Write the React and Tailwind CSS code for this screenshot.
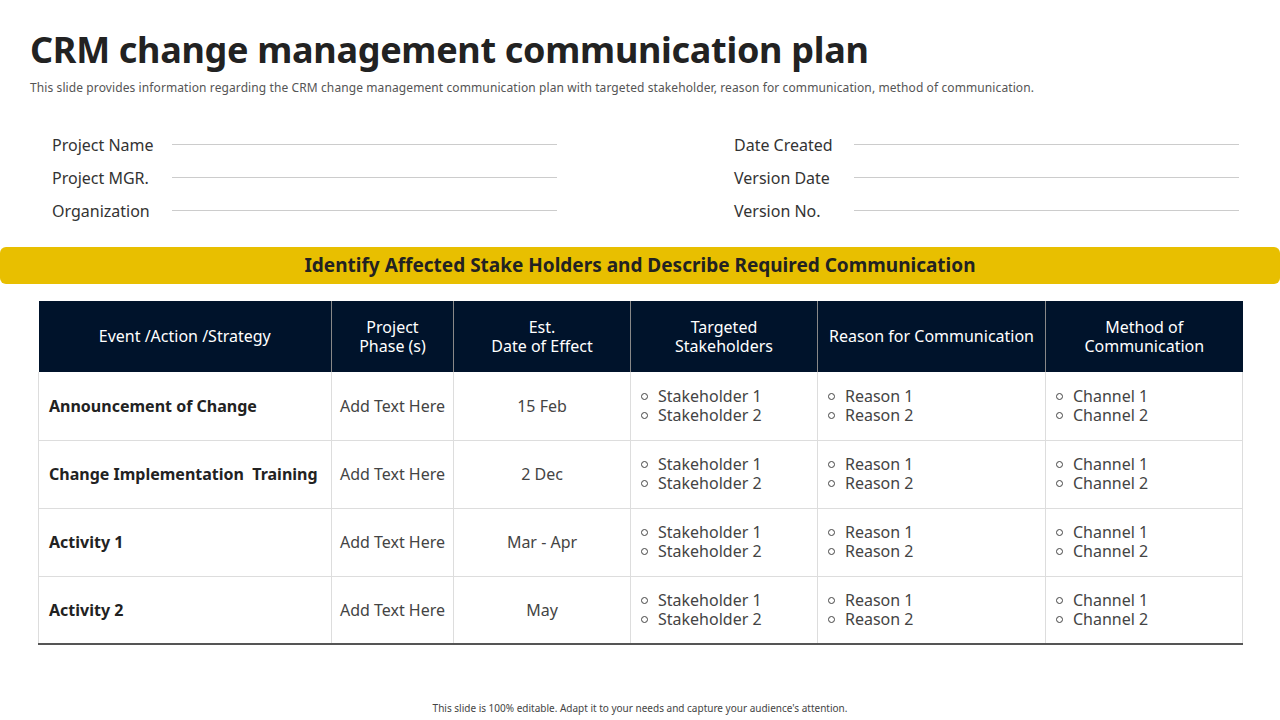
const rows = [
  ['Announcement of Change', '15 Feb'],
  ['Change Implementation  Training', '2 Dec'],
  ['Activity 1', 'Mar - Apr'],
  ['Activity 2', 'May'],
];

function Bullets({ items }) {
  return (
    <div className="flex flex-col pl-2.5">
      {items.map((t) => (
        <div key={t} className="flex items-center gap-2.5 leading-[19px]">
          <span className="w-[7px] h-[7px] rounded-full border border-[#444]" />
          <span>{t}</span>
        </div>
      ))}
    </div>
  );
}

function Field({ label }) {
  return (
    <div className="flex items-end h-[33px]">
      <span className="w-[120px] text-[16px] text-[#333] leading-none">{label}</span>
      <div className="flex-1 border-b border-[#ccc] mb-[8px]" />
    </div>
  );
}

export default function App() {
  return (
    <div className="w-[1280px] h-[720px] bg-white relative font-[Arimo,'Liberation_Sans',sans-serif]">
      <h1 className="pl-[30px] pt-[28px] text-[36px] font-bold text-[#222] leading-[44px] font-['Open_Sans',sans-serif] tracking-[-0.3px]">
        CRM change management communication plan
      </h1>
      <p className="pl-[30px] mt-[8px] text-[12px] text-[#555] leading-4 tracking-[0.1px]">
        This slide provides information regarding the CRM change management communication plan with targeted stakeholder, reason for communication, method of communication.
      </p>
      <div className="grid grid-cols-2 gap-x-[177px] pl-[52px] pr-[41px] mt-[34px] font-['Open_Sans',sans-serif]">
        <div className="flex flex-col -mt-[10px]">
          <Field label="Project Name" />
          <Field label="Project MGR." />
          <Field label="Organization" />
        </div>
        <div className="flex flex-col -mt-[10px]">
          <Field label="Date Created" />
          <Field label="Version Date" />
          <Field label="Version No." />
        </div>
      </div>
      <div className="mt-[28px] h-[37px] bg-[#e8bf00] rounded-[6px] flex items-center justify-center text-[19px] font-bold text-[#222] font-['Lato',sans-serif]">
        Identify Affected Stake Holders and Describe Required Communication
      </div>
      <table className="ml-[38px] mt-[17px] w-[1204px] border-collapse text-[16px] text-[#444] table-fixed">
        <colgroup>
          <col className="w-[293px]" /><col className="w-[122px]" /><col className="w-[177px]" />
          <col className="w-[187px]" /><col className="w-[228px]" /><col className="w-[197px]" />
        </colgroup>
        <thead>
          <tr className="h-[71px] bg-[#00132b] text-white text-center leading-[19px]">
            <th className="font-normal border-r border-[#888]">Event /Action /Strategy</th>
            <th className="font-normal border-r border-[#888]">Project<br />Phase (s)</th>
            <th className="font-normal border-r border-[#888]">Est.<br />Date of Effect</th>
            <th className="font-normal border-r border-[#888]">Targeted<br />Stakeholders</th>
            <th className="font-normal border-r border-[#888]">Reason for Communication</th>
            <th className="font-normal">Method of<br />Communication</th>
          </tr>
        </thead>
        <tbody>
          {rows.map(([name, date], i) => (
            <tr key={name} className={`h-[68px] ${i === rows.length - 1 ? 'border-b-2 border-[#555]' : 'border-b border-[#ddd]'}`}>
              <td className="pl-[10px] font-bold text-[#222] border-l border-r border-[#ddd] whitespace-pre">{name}</td>
              <td className="text-center border-r border-[#ddd]">Add Text Here</td>
              <td className="text-center border-r border-[#ddd]">{date}</td>
              <td className="border-r border-[#ddd]"><Bullets items={['Stakeholder 1', 'Stakeholder 2']} /></td>
              <td className="border-r border-[#ddd]"><Bullets items={['Reason 1', 'Reason 2']} /></td>
              <td className="border-r border-[#ddd]"><Bullets items={['Channel 1', 'Channel 2']} /></td>
            </tr>
          ))}
        </tbody>
      </table>
      <p className="absolute bottom-[4px] w-full text-center text-[10px] text-[#444]">
        This slide is 100% editable. Adapt it to your needs and capture your audience's attention.
      </p>
    </div>
  );
}
